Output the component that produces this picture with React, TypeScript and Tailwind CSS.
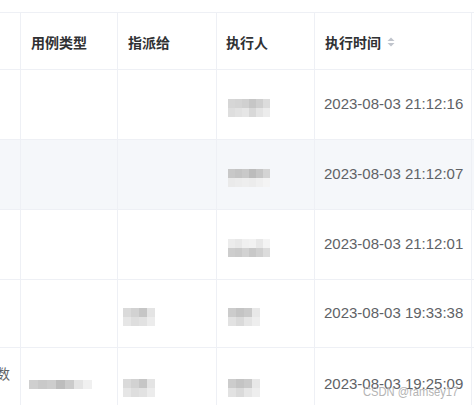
import React from "react";

const cjk = { fontFamily: '"Noto Sans CJK SC", "Noto Sans", sans-serif' };
const arial = { fontFamily: '"Liberation Sans", Arial, sans-serif' };

type Blur = { w: number; rows: string[][] };

const BlurBlock = ({ w, rows }: Blur) => (
  <div className="flex flex-col" style={{ width: w }}>
    {rows.map((r, i) => (
      <div key={i} className="flex h-[9px]">
        {r.map((c, j) => (
          <div key={j} className="flex-1" style={{ background: c }} />
        ))}
      </div>
    ))}
  </div>
);

const nameA: Blur = {
  w: 42,
  rows: [
    ["#d6d6d6", "#d4d4d4", "#d0d0d0", "#c6c6c6", "#cfcfcf", "#dcdcdc"],
    ["#dedede", "#e2e2e2", "#e6e6e6", "#d8d8d8", "#e4e4e4", "#ececec"],
  ],
};
const nameB: Blur = {
  w: 42,
  rows: [
    ["#c8c8c8", "#c4c4c4", "#c9c9c9", "#bcbcbc", "#c6c6c6", "#d4d4d4"],
    ["#eaeaea", "#ececec", "#eeeeee", "#ececec", "#f0f0f0", "#f4f4f4"],
  ],
};
const nameC: Blur = {
  w: 42,
  rows: [
    ["#ececec", "#e8e8e8", "#f0f0f0", "#f2f2f2", "#e8e8e8", "#f4f4f4"],
    ["#cdcdcd", "#cacaca", "#d2d2d2", "#c8c8c8", "#d0d0d0", "#dcdcdc"],
  ],
};
const small: Blur = {
  w: 32,
  rows: [
    ["#dadada", "#d2d2d2", "#c6c6c6", "#e4e4e4"],
    ["#e6e6e6", "#dedede", "#e2e2e2", "#ececec"],
  ],
};
const smallExec: Blur = {
  w: 32,
  rows: [
    ["#cccccc", "#c4c4c4", "#cacaca", "#e8e8e8"],
    ["#e2e2e2", "#dadada", "#e6e6e6", "#eeeeee"],
  ],
};
const wide: Blur = {
  w: 63,
  rows: [["#cfcfcf", "#c9c9c9", "#cdcdcd", "#bdbdbd", "#cbcbcb", "#e4e4e4", "#f0f0f0"]],
};

const rows = [
  { time: "2023-08-03 21:12:16", h: "h-[70px]", exec: nameA },
  { time: "2023-08-03 21:12:07", h: "h-[70px]", exec: nameB, stripe: true },
  { time: "2023-08-03 21:12:01", h: "h-[70px]", exec: nameC },
  { time: "2023-08-03 19:33:38", h: "h-[68px]", exec: smallExec, assign: small },
  { time: "2023-08-03 19:25:09", h: "h-[74px]", exec: smallExec, assign: small, type: wide, lead: true },
];

const grid = "grid grid-cols-[21px_97px_99px_98px_157px_1fr] border-b border-[#eef0f5]";
const cell = "border-r border-[#eef0f5] flex items-center overflow-hidden";

const SortIcon = () => (
  <svg width="8" height="10" viewBox="0 0 8 10" className="ml-[6px]">
    <path d="M4 0.5 L7.5 4 L0.5 4 Z" fill="#c0c4cc" />
    <path d="M4 9.5 L7.5 6 L0.5 6 Z" fill="#c0c4cc" />
  </svg>
);

export default function App() {
  return (
    <div className="relative w-[474px] h-[405px] overflow-hidden bg-white pt-[12px]">
      <div className="border-t border-[#eef0f5]">
        <div className={`${grid} h-[57px] text-[14px] font-bold text-[#303133]`} style={cjk}>
          <div className={cell} />
          <div className={`${cell} pl-[10px] pt-[2px]`}>用例类型</div>
          <div className={`${cell} pl-[10px] pt-[2px]`}>指派给</div>
          <div className={`${cell} pl-[9px] pt-[2px]`}>执行人</div>
          <div className={`${cell} pl-[10px] pt-[2px]`}>
            执行时间
            <SortIcon />
          </div>
          <div />
        </div>
        {rows.map((r, i) => (
          <div key={i} className={`${grid} ${r.h} ${r.stripe ? "bg-[#f5f7fa]" : ""}`}>
            <div className={`${cell} justify-end pr-[10px] text-[14px] text-[#606266]`} style={cjk}>
              {r.lead && (
                <div className="whitespace-nowrap leading-[23px] shrink-0">
                  <div>测试用例参数</div>
                  <div className="text-left">值</div>
                </div>
              )}
            </div>
            <div className={`${cell} pl-[8px]`}>{r.type && <BlurBlock {...r.type} />}</div>
            <div className={`${cell} pl-[5px] pt-[6px]`}>{r.assign && <BlurBlock {...r.assign} />}</div>
            <div className={`${cell} pl-[11px] pt-[6px]`}>{r.exec && <BlurBlock {...r.exec} />}</div>
            <div className={`${cell} pl-[9px] text-[15px] text-[#606266]`} style={arial}>
              {r.time}
            </div>
            <div />
          </div>
        ))}
      </div>
      <div
        className="absolute left-[363px] top-[382px] text-[13px] text-[#b4b4b4] whitespace-nowrap origin-left scale-x-[0.86]"
        style={arial}
      >
        CSDN @ramsey17
      </div>
    </div>
  );
}
